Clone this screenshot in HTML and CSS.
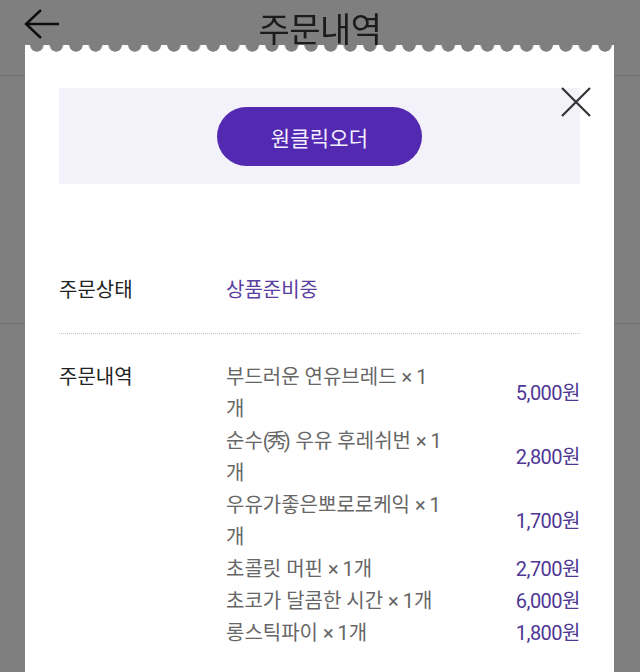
FILE: index.html
```html
<!DOCTYPE html>
<html lang="ko">
<head>
    <meta charset="UTF-8">
    <meta name="viewport" content="width=device-width, initial-scale=1.0">
    <title>주문내역</title>
    <link rel="stylesheet" href="styles.css">
</head>
<body>
    <div class="page">
        <header class="appbar">
            <button class="back-btn" aria-label="뒤로">
                <svg width="36" height="32" viewBox="0 0 36 32">
                    <path d="M17 2 L2 16 L17 30 M2 16 H35" fill="none" stroke="#1b1b1b" stroke-width="2.4"/>
                </svg>
            </button>
            <h1 class="appbar-title">주문내역</h1>
        </header>
        <div class="page-body"></div>
    </div>

    <div class="dim"></div>

    <div class="receipt">
        <button class="close-btn" aria-label="닫기">
            <svg width="32" height="32" viewBox="0 0 32 32">
                <path d="M2 2 L30 30 M30 2 L2 30" fill="none" stroke="#333" stroke-width="2.2"/>
            </svg>
        </button>

        <div class="quick-order">
            <button class="btn-order">원클릭오더</button>
        </div>

        <div class="info-row">
            <div class="info-label">주문상태</div>
            <div class="info-value status">상품준비중</div>
        </div>

        <div class="info-row">
            <div class="info-label">주문내역</div>
            <div class="order-list">
                <div class="order-item">
                    <span class="item-name">부드러운 연유브레드 <span class="qty">× 1</span>개</span>
                    <span class="item-price">5,000원</span>
                </div>
                <div class="order-item">
                    <span class="item-name">순수<span class="hanja">(秀</span>) 우유 후레쉬번 <span class="qty">× 1</span>개</span>
                    <span class="item-price">2,800원</span>
                </div>
                <div class="order-item">
                    <span class="item-name">우유가좋은뽀로로케익 <span class="qty">× 1</span>개</span>
                    <span class="item-price">1,700원</span>
                </div>
                <div class="order-item">
                    <span class="item-name">초콜릿 머핀 <span class="qty">× 1</span>개</span>
                    <span class="item-price">2,700원</span>
                </div>
                <div class="order-item">
                    <span class="item-name">초코가 달콤한 시간 <span class="qty">× 1</span>개</span>
                    <span class="item-price">6,000원</span>
                </div>
                <div class="order-item">
                    <span class="item-name">롱스틱파이 <span class="qty">× 1</span>개</span>
                    <span class="item-price">1,800원</span>
                </div>
            </div>
        </div>
    </div>
</body>
</html>
```

FILE: styles.css
```css
* {
    margin: 0;
    padding: 0;
    box-sizing: border-box;
}

body {
    font-family: Roboto, "Noto Sans CJK KR", sans-serif;
    background: #fff;
    color: #222;
    height: 672px;
    overflow: hidden;
}

button {
    background: none;
    border: none;
    font-family: inherit;
    cursor: pointer;
}

/* page underneath the dim layer */
.appbar {
    position: relative;
    height: 76px;
    border-bottom: 1px solid #dedede;
    text-align: center;
}

.back-btn {
    position: absolute;
    left: 24px;
    top: 8px;
    width: 36px;
    height: 32px;
}

.back-btn svg {
    display: block;
}

.appbar-title {
    font-size: 34px;
    font-weight: 400;
    line-height: 60px;
    color: #1b1b1b;
    position: relative;
    z-index: 2;
    letter-spacing: -0.5px;
}

.page-body {
    height: 248px;
    border-bottom: 1px solid #dedede;
}

.dim {
    position: fixed;
    inset: 0;
    background: rgba(0, 0, 0, 0.5);
    z-index: 1;
}

/* receipt modal */
.receipt {
    position: absolute;
    left: 25px;
    top: 45px;
    width: 589px;
    height: 700px;
    background: #fff;
    z-index: 3;
    padding: 43px 34px 0;
}

.receipt::before {
    content: "";
    position: absolute;
    left: 2px;
    right: 0;
    top: 0;
    height: 8px;
    background: radial-gradient(circle at 9.8px 0, #7f7f7f 6.3px, transparent 7px) repeat-x;
    background-size: 19.6px 8px;
}

.close-btn {
    position: absolute;
    left: 535px;
    top: 41px;
    width: 32px;
    height: 32px;
    z-index: 2;
}

.close-btn svg {
    display: block;
}

.quick-order {
    background: #f3f1f9;
    padding: 19px 0 18px;
    display: flex;
    justify-content: center;
}

.btn-order {
    width: 205px;
    height: 59px;
    border-radius: 30px;
    background: #5229b0;
    color: #f2efff;
    font-size: 21px;
    letter-spacing: 0.2px;
}

.info-row {
    display: grid;
    grid-template-columns: 167px 1fr;
    padding: 27px 0;
    font-size: 20px;
    line-height: 32px;
}

.quick-order + .info-row {
    margin-top: 63px;
    border-bottom: 1px dotted #c4c4c4;
}

.info-label {
    color: #222;
}

.status {
    color: #5a3ea0;
}

.order-item {
    display: flex;
    align-items: center;
    justify-content: space-between;
}

.item-name {
    width: 216px;
    color: #666;
}

.qty {
    white-space: nowrap;
    word-spacing: -1px;
}

.hanja {
    letter-spacing: -3px;
}

.item-price {
    color: #4f3796;
    letter-spacing: -0.5px;
}
```
